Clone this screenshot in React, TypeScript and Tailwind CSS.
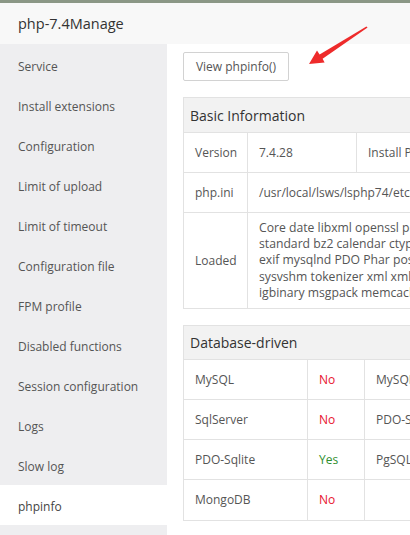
const menu = [
  'Service',
  'Install extensions',
  'Configuration',
  'Limit of upload',
  'Limit of timeout',
  'Configuration file',
  'FPM profile',
  'Disabled functions',
  'Session configuration',
  'Logs',
  'Slow log',
  'phpinfo',
]

const loaded = [
  'Core date libxml openssl pcre sqlite3 zlib bcmath',
  'standard bz2 calendar ctype curl dom hash fileinfo',
  'exif mysqlnd PDO Phar posix readline Reflection',
  'sysvshm tokenizer xml xmlreader xmlwriter xsl zip',
  'igbinary msgpack memcached redis opcache',
]

const drivers = [
  { name: 'MySQL', ok: false, name2: 'MySQL-PDO', ok2: true },
  { name: 'SqlServer', ok: false, name2: 'PDO-SqlServer', ok2: false },
  { name: 'PDO-Sqlite', ok: true, name2: 'PgSQL', ok2: false },
  { name: 'MongoDB', ok: false, name2: '', ok2: null },
]

function Status({ ok }: { ok: boolean | null }) {
  if (ok === null) return null
  return ok ? <span className="text-[#2f8f2f]">Yes</span> : <span className="text-[#e8132e]">No</span>
}

export default function App() {
  return (
    <div className="relative w-[410px] h-[535px] overflow-hidden bg-white text-[#555] font-['Open_Sans',sans-serif]">
      <div className="h-[3px] bg-[#8b9786]" />
      <div className="h-[41px] bg-[#f8f8f8] flex items-center pl-[18px] pt-px text-[14.5px] text-[#333]">
        php-7.4Manage
      </div>

      <div className="flex h-[491px]">
        <div className="w-[167px] shrink-0 bg-[#eeeef0] pt-px">
          {menu.map((m) => (
            <div
              key={m}
              className={`h-10 flex items-center pl-[18px] pt-1 text-[12px] ${m === 'phpinfo' ? 'bg-white text-[#444]' : 'text-[#555]'}`}
            >
              {m}
            </div>
          ))}
        </div>

        <div className="flex-1 min-w-0 overflow-hidden pl-4 pt-2">
          <button className="h-[29px] w-[106px] border border-[#d2d2d2] rounded-[2px] bg-white text-[12px] text-[#555]">
            View phpinfo()
          </button>

          <div className="mt-4 w-[620px] border border-[#e2e2e2]">
            <div className="h-[35px] flex items-center px-[6px] bg-[#f2f2f2] border-b border-[#e2e2e2] text-[14px] text-[#333]">
              Basic Information
            </div>
            <div className="flex h-10 border-b border-[#e2e2e2] text-[12px]">
              <div className="w-16 shrink-0 border-r border-[#e2e2e2] flex items-center pl-[11px]">Version</div>
              <div className="w-[109px] shrink-0 border-r border-[#e2e2e2] flex items-center pl-[11px]">7.4.28</div>
              <div className="w-[110px] shrink-0 border-r border-[#e2e2e2] flex items-center pl-[11px] whitespace-nowrap">Install Path</div>
              <div className="flex-1 flex items-center pl-[11px]">/usr/local/lsws/lsphp74</div>
            </div>
            <div className="flex h-10 border-b border-[#e2e2e2] text-[12px]">
              <div className="w-16 shrink-0 border-r border-[#e2e2e2] flex items-center pl-[11px]">php.ini</div>
              <div className="flex-1 flex items-center pl-[11px] whitespace-nowrap">/usr/local/lsws/lsphp74/etc/php/7.4/litespeed/php.ini</div>
            </div>
            <div className="flex h-[95px] text-[12px]">
              <div className="w-16 shrink-0 border-r border-[#e2e2e2] flex items-center pl-[11px]">Loaded</div>
              <div className="flex-1 flex flex-col justify-center pl-[11px] leading-[16.3px] text-[12.2px]">
                {loaded.map((l) => (
                  <div key={l} className="whitespace-nowrap">{l}</div>
                ))}
              </div>
            </div>
          </div>

          <div className="mt-4 w-[620px] border border-[#e2e2e2]">
            <div className="h-[34px] flex items-center px-[6px] bg-[#f2f2f2] border-b border-[#e2e2e2] text-[14px] text-[#333]">
              Database-driven
            </div>
            {drivers.map((d, i) => (
              <div key={d.name} className={`flex h-10 text-[12px] ${i < drivers.length - 1 ? 'border-b border-[#e2e2e2]' : ''}`}>
                <div className="w-[124px] shrink-0 border-r border-[#e2e2e2] flex items-center pl-[11px]">{d.name}</div>
                <div className="w-[57px] shrink-0 border-r border-[#e2e2e2] flex items-center pl-[11px]"><Status ok={d.ok} /></div>
                <div className="w-[124px] shrink-0 border-r border-[#e2e2e2] flex items-center pl-[11px] whitespace-nowrap">{d.name2}</div>
                <div className="flex-1 flex items-center pl-[11px]"><Status ok={d.ok2} /></div>
              </div>
            ))}
          </div>
        </div>
      </div>

      {/* red annotation arrow */}
      <svg className="absolute left-[300px] top-[22px]" width="72" height="48" viewBox="0 0 72 48">
        <polygon
          points="9,42 24.6,40.4 22.6,36.8 67.6,5.6 66.4,4.4 19.6,32.4 17,28.6"
          fill="#ee2b2b"
        />
      </svg>
    </div>
  )
}
